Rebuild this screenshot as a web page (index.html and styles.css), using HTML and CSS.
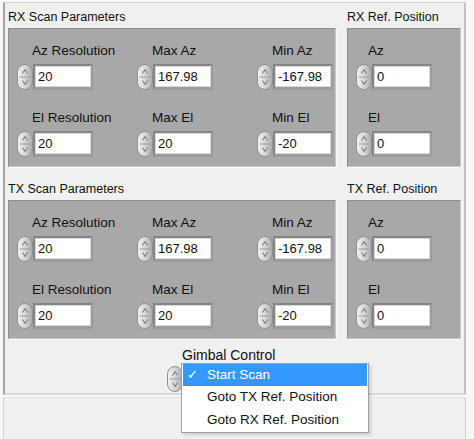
FILE: index.html
```html
<!DOCTYPE html>
<html lang="en">
<head>
  <meta charset="UTF-8">
  <title>Gimbal Scan Setup</title>
  <link rel="stylesheet" href="styles.css">
</head>
<body>
  <!-- shared spinner drawing -->
  <svg class="defs" width="0" height="0">
    <defs>
      <linearGradient id="spin-fill" x1="0" y1="0" x2="1" y2="0">
        <stop offset="0" stop-color="#f4f4f4"/>
        <stop offset="0.5" stop-color="#d6d6d6"/>
        <stop offset="1" stop-color="#a9a9a9"/>
      </linearGradient>
      <symbol id="spin" viewBox="0 0 16 26">
        <rect x="0.5" y="0.5" width="15" height="25" rx="7.5" fill="url(#spin-fill)" stroke="#909090"/>
        <path d="M2.5 13h11" stroke="#9c9c9c"/>
        <path d="M5.5 9.5l2.5-4 2.5 4" fill="none" stroke="#6c6c6c"/>
        <path d="M5.5 16.5l2.5 4 2.5-4" fill="none" stroke="#6c6c6c"/>
      </symbol>
    </defs>
  </svg>

  <div class="frame">

    <!-- RX -->
    <div class="group">
      <div class="scan">
        <div class="caption">RX Scan Parameters</div>
        <div class="panel grid">
          <div class="field">
            <div class="label">Az Resolution</div>
            <div class="control"><svg class="spin"><use href="#spin"/></svg><div class="box">20</div></div>
          </div>
          <div class="field">
            <div class="label">Max Az</div>
            <div class="control"><svg class="spin"><use href="#spin"/></svg><div class="box">167.98</div></div>
          </div>
          <div class="field">
            <div class="label">Min Az</div>
            <div class="control"><svg class="spin"><use href="#spin"/></svg><div class="box">-167.98</div></div>
          </div>
          <div class="field">
            <div class="label">El Resolution</div>
            <div class="control"><svg class="spin"><use href="#spin"/></svg><div class="box">20</div></div>
          </div>
          <div class="field">
            <div class="label">Max El</div>
            <div class="control"><svg class="spin"><use href="#spin"/></svg><div class="box">20</div></div>
          </div>
          <div class="field">
            <div class="label">Min El</div>
            <div class="control"><svg class="spin"><use href="#spin"/></svg><div class="box">-20</div></div>
          </div>
        </div>
      </div>
      <div class="ref">
        <div class="caption">RX Ref. Position</div>
        <div class="panel stack">
          <div class="field">
            <div class="label short">Az</div>
            <div class="control"><svg class="spin"><use href="#spin"/></svg><div class="box">0</div></div>
          </div>
          <div class="field">
            <div class="label short">El</div>
            <div class="control"><svg class="spin"><use href="#spin"/></svg><div class="box">0</div></div>
          </div>
        </div>
      </div>
    </div>

    <!-- TX -->
    <div class="group">
      <div class="scan">
        <div class="caption">TX Scan Parameters</div>
        <div class="panel grid">
          <div class="field">
            <div class="label">Az Resolution</div>
            <div class="control"><svg class="spin"><use href="#spin"/></svg><div class="box">20</div></div>
          </div>
          <div class="field">
            <div class="label">Max Az</div>
            <div class="control"><svg class="spin"><use href="#spin"/></svg><div class="box">167.98</div></div>
          </div>
          <div class="field">
            <div class="label">Min Az</div>
            <div class="control"><svg class="spin"><use href="#spin"/></svg><div class="box">-167.98</div></div>
          </div>
          <div class="field">
            <div class="label">El Resolution</div>
            <div class="control"><svg class="spin"><use href="#spin"/></svg><div class="box">20</div></div>
          </div>
          <div class="field">
            <div class="label">Max El</div>
            <div class="control"><svg class="spin"><use href="#spin"/></svg><div class="box">20</div></div>
          </div>
          <div class="field">
            <div class="label">Min El</div>
            <div class="control"><svg class="spin"><use href="#spin"/></svg><div class="box">-20</div></div>
          </div>
        </div>
      </div>
      <div class="ref">
        <div class="caption">TX Ref. Position</div>
        <div class="panel stack">
          <div class="field">
            <div class="label short">Az</div>
            <div class="control"><svg class="spin"><use href="#spin"/></svg><div class="box">0</div></div>
          </div>
          <div class="field">
            <div class="label short">El</div>
            <div class="control"><svg class="spin"><use href="#spin"/></svg><div class="box">0</div></div>
          </div>
        </div>
      </div>
    </div>

    <!-- Gimbal -->
    <div class="gimbal">
      <div class="gimbal-label">Gimbal Control</div>
      <div class="gimbal-control">
        <svg class="spin"><use href="#spin"/></svg>
        <ul class="menu">
          <li class="selected"><span class="check">✓</span>Start Scan</li>
          <li><span class="check"></span>Goto TX Ref. Position</li>
          <li><span class="check"></span>Goto RX Ref. Position</li>
        </ul>
      </div>
    </div>
  </div>

  <div class="footer"></div>
</body>
</html>
```

FILE: styles.css
```css
/* Basic Reset */
* {
  margin: 0;
  padding: 0;
  box-sizing: border-box;
}

body {
  font-family: 'Liberation Sans', Arial, sans-serif;
  background-color: #f7f7f7;
  color: #111;
  padding: 2px 0 0 3px;
  width: 474px;
  height: 439px;
  overflow: hidden;
}

.defs {
  display: block;
  width: 0;
  height: 0;
  overflow: hidden;
}

/* Outer front panel frame */
.frame {
  width: 463px;
  height: 393px;
  background-color: #f0f0f0;
  border-left: 2px solid #a4a4a4;
  border-top: 1px solid #d0d0d0;
  border-right: 2px solid #c4c4c4;
  border-bottom: 2px solid #d8d8d8;
  padding: 0 0 0 3px;
}

.group {
  display: flex;
  gap: 11px;
  margin-bottom: 8px;
}

.caption {
  height: 25px;
  padding-top: 7px;
  font-size: 12.5px;
  line-height: 15px;
  white-space: nowrap;
}

.panel {
  height: 139px;
  background-color: #a8a8a8;
  border-top: 1px solid #8e8e8e;
  border-left: 1px solid #8e8e8e;
  border-right: 1px solid #c8c8c8;
  border-bottom: 1px solid #c8c8c8;
  box-shadow: 1px 1px 0 #fafafa;
  padding: 14px 0 0 8px;
}

.scan .panel {
  width: 328px;
}

.ref .panel {
  width: 114px;
}

.grid {
  display: grid;
  grid-template-columns: 120px 120px 1fr;
  align-content: start;
  row-gap: 20px;
}

.stack {
  display: flex;
  flex-direction: column;
  gap: 20px;
}

.label {
  font-size: 13.5px;
  line-height: 16px;
  padding-left: 15px;
  margin-bottom: 5px;
  white-space: nowrap;
}

.label.short {
  padding-left: 12px;
}

.control {
  display: flex;
  align-items: center;
  height: 26px;
}

.spin {
  width: 16px;
  height: 26px;
  flex: none;
}

.box {
  width: 60px;
  height: 26px;
  border-top: 2px solid #858585;
  border-left: 2px solid #858585;
  border-right: 2px solid #9c9c9c;
  border-bottom: 3px solid #9c9c9c;
  background-color: #ffffff;
  background-clip: padding-box;
  font-size: 13px;
  line-height: 21px;
  padding-left: 3px;
  box-shadow: inset 0 0 0 1px #d8d8d8;
}

/* Gimbal control ring */
.gimbal {
  padding: 0 0 0 159px;
}

.gimbal-label {
  font-size: 14px;
  line-height: 16px;
  padding-left: 15px;
  margin-bottom: 3px;
}

.gimbal-control {
  position: relative;
  height: 26px;
}

.menu {
  position: absolute;
  left: 14px;
  top: -3px;
  width: 188px;
  list-style: none;
  background-color: #ffffff;
  border: 1px solid #a0a0a0;
  box-shadow: 2px 2px 3px rgba(0, 0, 0, 0.15);
  padding: 0 1px;
  font-size: 13.5px;
}

.menu li {
  height: 23px;
  line-height: 22px;
  display: flex;
  color: #111;
}

.menu li.selected {
  background-color: #3399ff;
  color: #ffffff;
  height: 22px;
}

.check {
  width: 24px;
  padding-left: 4px;
  font-size: 13px;
}

.footer {
  width: 463px;
  height: 42px;
  margin-top: 2px;
  background-color: #f0f0f0;
  border-left: 1px solid #d4d4d4;
  border-top: 1px solid #e4e4e4;
  border-right: 1px solid #d0d0d0;
}
```
